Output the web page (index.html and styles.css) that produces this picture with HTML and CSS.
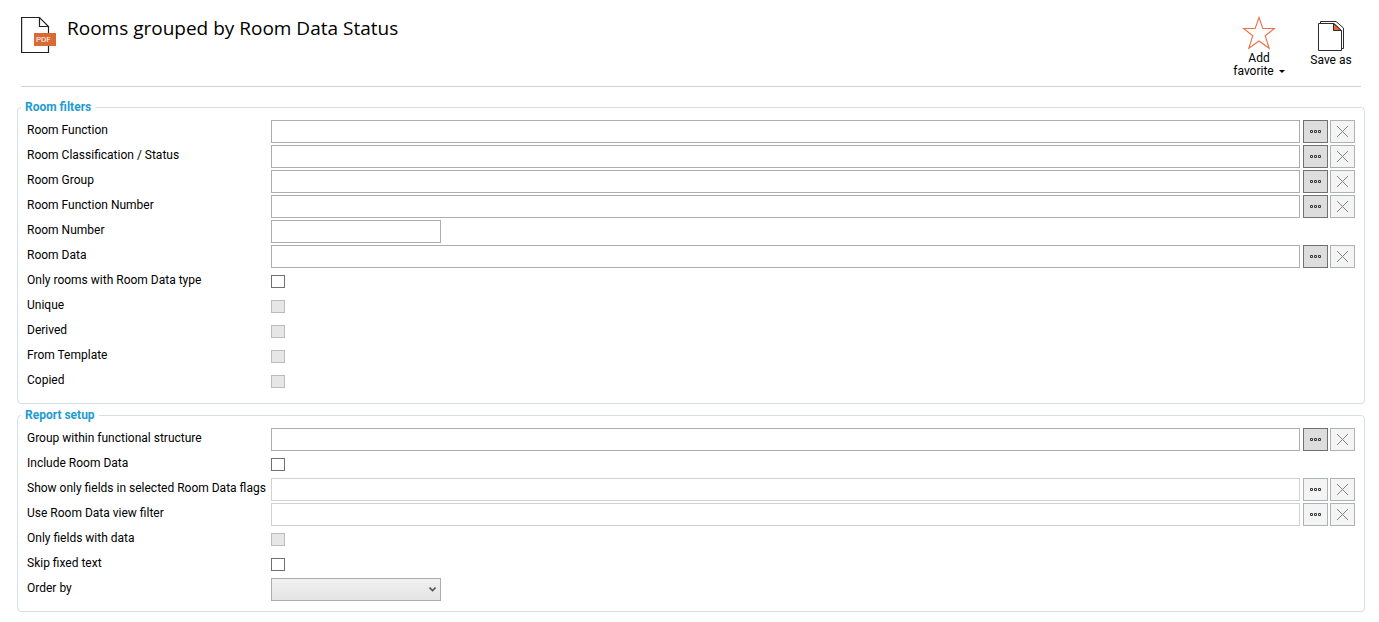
FILE: index.html
```html
<!DOCTYPE html>
<html lang="en">
<head>
    <meta charset="utf-8">
    <title>Rooms grouped by Room Data Status</title>
    <link rel="stylesheet" href="styles.css">
</head>
<body>
    <svg class="symbols" width="0" height="0" aria-hidden="true">
        <symbol id="dots" viewBox="0 0 11 3">
            <path d="M0.5 0.5h2v2h-2zM4.5 0.5h2v2h-2zM8.5 0.5h2v2h-2z" fill="none" stroke="#3c3c3c" />
        </symbol>
        <symbol id="cross" viewBox="0 0 11 11">
            <path d="M0 0L11 11M11 0L0 11" fill="none" stroke="currentColor" />
        </symbol>
    </svg>

    <header class="header">
        <svg class="pdf-icon" width="36" height="38" viewBox="0 0 36 38" aria-hidden="true">
            <path d="M0.6 1.5H18.5L27.5 10.5V36.5H0.6Z" fill="#fff" stroke="#222" stroke-width="1.2" />
            <path d="M18.5 1.5V10.5H27.5" fill="none" stroke="#222" stroke-width="1.2" />
            <rect x="13" y="17" width="22" height="13" fill="#d86b35" />
            <text class="pdf-text" x="15" y="26">PDF</text>
        </svg>
        <h1 class="title">Rooms grouped by Room Data Status</h1>
        <div class="actions">
            <button type="button" class="action">
                <svg width="34" height="34" viewBox="0 0 34 34" aria-hidden="true">
                    <path d="M17 1.5L20.8 12.5H32.5L23.2 19.7L27.2 32.3L17 25L6.8 32.3L10.8 19.7L1.5 12.5H13.2Z" fill="#fff" stroke="#ee7048" stroke-width="1.1" />
                </svg>
                <span>Add<br>favorite <i class="arrow"></i></span>
            </button>
            <button type="button" class="action save">
                <svg width="28" height="32" viewBox="0 0 28 32" aria-hidden="true">
                    <path d="M3.5 3V1.5H19L26.5 8V28.5H25" fill="#fff" stroke="#2d2d2d" />
                    <path d="M1.5 3.5H17L24.5 10.5V30.5H1.5Z" fill="#fff" stroke="#2d2d2d" />
                    <path d="M16.5 3.5V10.5H24.5Z" fill="#ec6a35" stroke="#2d2d2d" />
                </svg>
                <span>Save as</span>
            </button>
        </div>
    </header>

    <main>
        <fieldset class="group">
            <legend>Room filters</legend>
            <div class="row">
                <label for="function">Room Function</label>
                <input type="text" class="text" id="function">
                <button type="button" class="btn" aria-label="Browse"><svg class="dots"><use href="#dots" /></svg></button>
                <button type="button" class="btn" aria-label="Clear" disabled><svg class="cross"><use href="#cross" /></svg></button>
            </div>
            <div class="row">
                <label for="classification">Room Classification / Status</label>
                <input type="text" class="text" id="classification">
                <button type="button" class="btn" aria-label="Browse"><svg class="dots"><use href="#dots" /></svg></button>
                <button type="button" class="btn" aria-label="Clear" disabled><svg class="cross"><use href="#cross" /></svg></button>
            </div>
            <div class="row">
                <label for="group">Room Group</label>
                <input type="text" class="text" id="group">
                <button type="button" class="btn" aria-label="Browse"><svg class="dots"><use href="#dots" /></svg></button>
                <button type="button" class="btn" aria-label="Clear" disabled><svg class="cross"><use href="#cross" /></svg></button>
            </div>
            <div class="row">
                <label for="function-number">Room Function Number</label>
                <input type="text" class="text" id="function-number">
                <button type="button" class="btn" aria-label="Browse"><svg class="dots"><use href="#dots" /></svg></button>
                <button type="button" class="btn" aria-label="Clear" disabled><svg class="cross"><use href="#cross" /></svg></button>
            </div>
            <div class="row">
                <label for="number">Room Number</label>
                <input type="text" class="text short" id="number">
            </div>
            <div class="row">
                <label for="data">Room Data</label>
                <input type="text" class="text" id="data">
                <button type="button" class="btn" aria-label="Browse"><svg class="dots"><use href="#dots" /></svg></button>
                <button type="button" class="btn" aria-label="Clear" disabled><svg class="cross"><use href="#cross" /></svg></button>
            </div>
            <div class="row">
                <label for="only-rooms">Only rooms with Room Data type</label>
                <input type="checkbox" class="check" id="only-rooms">
            </div>
            <div class="row">
                <label for="unique">Unique</label>
                <input type="checkbox" class="check" id="unique" disabled>
            </div>
            <div class="row">
                <label for="derived">Derived</label>
                <input type="checkbox" class="check" id="derived" disabled>
            </div>
            <div class="row">
                <label for="template">From Template</label>
                <input type="checkbox" class="check" id="template" disabled>
            </div>
            <div class="row">
                <label for="copied">Copied</label>
                <input type="checkbox" class="check" id="copied" disabled>
            </div>
        </fieldset>

        <fieldset class="group">
            <legend>Report setup</legend>
            <div class="row">
                <label for="structure">Group within functional structure</label>
                <input type="text" class="text" id="structure">
                <button type="button" class="btn" aria-label="Browse"><svg class="dots"><use href="#dots" /></svg></button>
                <button type="button" class="btn" aria-label="Clear" disabled><svg class="cross"><use href="#cross" /></svg></button>
            </div>
            <div class="row">
                <label for="include">Include Room Data</label>
                <input type="checkbox" class="check" id="include">
            </div>
            <div class="row">
                <label for="flags">Show only fields in selected Room Data flags</label>
                <input type="text" class="text" id="flags" disabled>
                <button type="button" class="btn" aria-label="Browse" disabled><svg class="dots"><use href="#dots" /></svg></button>
                <button type="button" class="btn" aria-label="Clear" disabled><svg class="cross"><use href="#cross" /></svg></button>
            </div>
            <div class="row">
                <label for="view-filter">Use Room Data view filter</label>
                <input type="text" class="text" id="view-filter" disabled>
                <button type="button" class="btn" aria-label="Browse" disabled><svg class="dots"><use href="#dots" /></svg></button>
                <button type="button" class="btn" aria-label="Clear" disabled><svg class="cross"><use href="#cross" /></svg></button>
            </div>
            <div class="row">
                <label for="with-data">Only fields with data</label>
                <input type="checkbox" class="check" id="with-data" disabled>
            </div>
            <div class="row">
                <label for="skip">Skip fixed text</label>
                <input type="checkbox" class="check" id="skip">
            </div>
            <div class="row">
                <label for="order">Order by</label>
                <div class="select">
                    <select id="order"><option></option></select>
                    <svg class="chevron" width="7" height="5" viewBox="0 0 7 5" aria-hidden="true">
                        <path d="M0.5 0.5L3.5 3.5L6.5 0.5" fill="none" stroke="#555" stroke-width="1.6" />
                    </svg>
                </div>
            </div>
        </fieldset>
    </main>
</body>
</html>
```
FILE: styles.css
```css
* {
    box-sizing: border-box;
}

body {
    margin: 0;
    padding: 16px 14px 8px 17px;
    background: #fff;
    color: #000;
    font-family: Roboto, sans-serif;
    font-size: 12px;
    line-height: 16px;
}

button,
input,
select {
    margin: 0;
    font: inherit;
    color: inherit;
}

.symbols {
    position: absolute;
}

.header {
    display: flex;
    align-items: flex-start;
    height: 71px;
    margin: 0 4px 12px;
    border-bottom: 1px solid #d0d0d0;
}

.pdf-text {
    font-size: 8px;
    fill: #fff;
}

.title {
    flex: 1;
    margin: 0 0 0 10px;
    font-family: "Open Sans", sans-serif;
    font-size: 19px;
    line-height: 24px;
    font-weight: normal;
}

.actions {
    display: flex;
    gap: 12px;
}

.action {
    display: flex;
    flex-direction: column;
    align-items: center;
    width: 60px;
    padding: 0;
    border: none;
    background: none;
    line-height: 13px;
}

.action span {
    margin-top: 2px;
    white-space: nowrap;
}

.save {
    padding-top: 4px;
}

.arrow {
    display: inline-block;
    margin: 0 0 2px 2px;
    border: 3px solid transparent;
    border-top-color: #000;
    border-bottom: none;
}

.group {
    min-width: 0;
    margin: 0 0 3px;
    padding: 5px 9px 8px;
    border: 1px solid #d5dfe5;
    border-radius: 4px;
}

.group legend {
    margin-left: -6px;
    padding: 0 4px;
    color: #1e9bd2;
    font-weight: bold;
}

.row {
    display: flex;
    align-items: flex-start;
    height: 25px;
}

.row label {
    flex: none;
    width: 244px;
    line-height: 20px;
    white-space: nowrap;
}

.text {
    flex: 1;
    min-width: 0;
    height: 23px;
    margin-right: 1px;
    padding: 0 4px;
    border: 1px solid #abadb3;
    border-radius: 0;
    background: #fff;
}

.text:disabled {
    border-color: #d0d1d4;
}

.short {
    flex: none;
    width: 170px;
}

.btn {
    display: flex;
    flex: none;
    align-items: center;
    justify-content: center;
    width: 25px;
    height: 23px;
    margin-left: 2px;
    padding: 0;
    border: 1px solid #707070;
    background: #ddd;
}

.btn:disabled {
    border-color: #adb2b5;
    background: #f4f4f4;
    color: #838383;
}

.dots {
    width: 11px;
    height: 3px;
}

.cross {
    width: 11px;
    height: 11px;
}

.check {
    appearance: none;
    width: 14px;
    height: 13px;
    margin-top: 5px;
    border: 1px solid #707070;
    background: #fff;
}

.check:disabled {
    border-color: #bcbcbc;
    background: #e6e6e6;
}

.select {
    position: relative;
    width: 170px;
}

.select select {
    display: block;
    appearance: none;
    width: 100%;
    height: 23px;
    padding: 0 20px 0 4px;
    border: 1px solid #acacac;
    border-radius: 0;
    background: linear-gradient(#f0f0f0, #e5e5e5);
}

.chevron {
    position: absolute;
    top: 9px;
    right: 5px;
    pointer-events: none;
}
```
